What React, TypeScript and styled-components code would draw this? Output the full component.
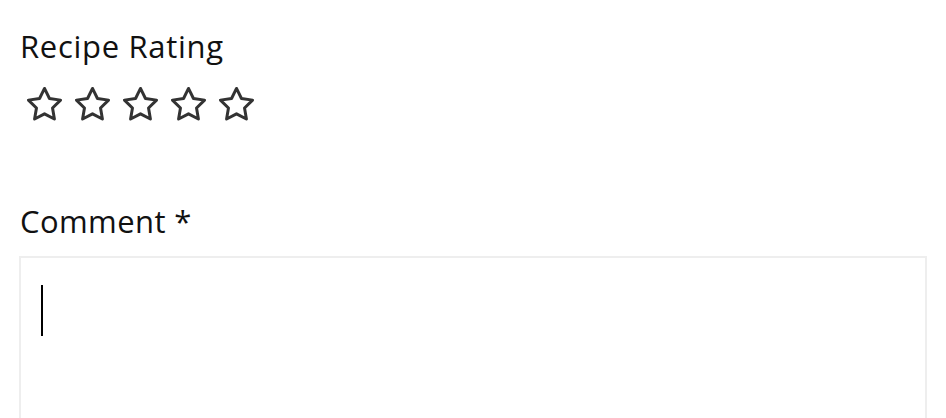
import { FC } from "react";
import styled, { createGlobalStyle } from "styled-components";

const GlobalStyle = createGlobalStyle`
  html, body {
    margin: 0;
    padding: 0;
    background: #ffffff;
  }
  body {
    font-family: "Open Sans", "Noto Sans", sans-serif;
    color: #111111;
  }
`;

const Form = styled.div`
  width: 908px;
  padding: 25px 0 0 19px;
  display: flex;
  flex-direction: column;
`;

const Field = styled.div`
  display: flex;
  flex-direction: column;
`;

const Label = styled.label<{ $spacing?: number }>`
  font-size: 31px;
  line-height: 42px;
  letter-spacing: ${({ $spacing }) => $spacing ?? 0.4}px;
  padding-left: 1px;
  color: #111111;
`;

const Stars = styled.div`
  display: flex;
  gap: 7px;
  margin: 17px 0 75px 5px;
`;

const StarButton = styled.button`
  border: 0;
  background: none;
  padding: 0;
  width: 41px;
  height: 41px;
  cursor: pointer;
  display: flex;
`;

const CommentBox = styled.div`
  margin-top: 14px;
  height: 200px;
  border: 2px solid #eeeeee;
  padding: 27px 20px;
`;

const Caret = styled.span`
  display: block;
  width: 2px;
  height: 51px;
  background: #000000;
`;

const Star: FC = () => (
  <StarButton aria-label="star">
    <svg width="41" height="41" viewBox="0 0 24 24" fill="none" stroke="#333333" strokeWidth="1.75" strokeLinejoin="round" strokeLinecap="round">
      <path d="M12 2.6l2.9 5.9 6.5.95-4.7 4.6 1.1 6.45L12 17.45l-5.8 3.05 1.1-6.45-4.7-4.6 6.5-.95z" />
    </svg>
  </StarButton>
);

export default function App() {
  return (
    <>
      <GlobalStyle />
      <Form>
        <Field>
          <Label $spacing={0.7}>Recipe Rating</Label>
          <Stars>
            {[0, 1, 2, 3, 4].map((i) => (
              <Star key={i} />
            ))}
          </Stars>
        </Field>
        <Field>
          <Label>Comment *</Label>
          <CommentBox>
            <Caret />
          </CommentBox>
        </Field>
      </Form>
    </>
  );
}
